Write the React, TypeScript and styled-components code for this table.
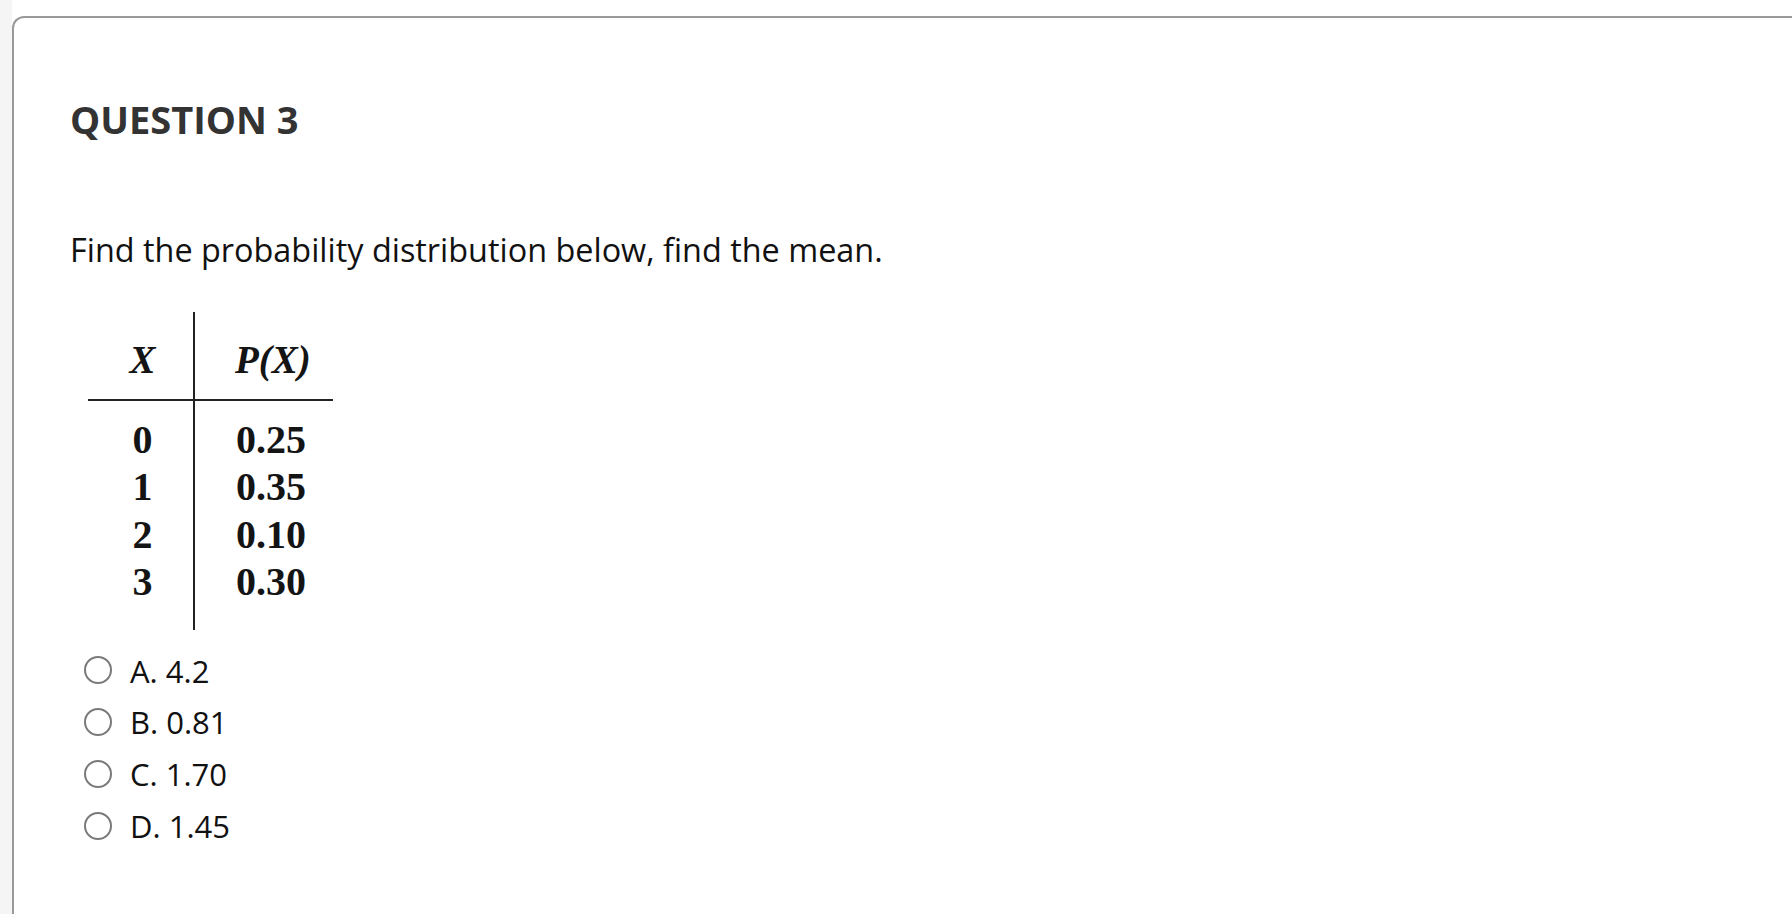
import React from "react";
import styled, { createGlobalStyle } from "styled-components";

const GlobalStyle = createGlobalStyle`
  html, body {
    margin: 0;
    padding: 0;
    background: #ffffff;
    overflow: hidden;
  }
  body {
    font-family: "Open Sans", "Noto Sans", sans-serif;
    color: #111111;
  }
`;

const Page = styled.div`
  display: flex;
  height: 914px;
  overflow: hidden;
  background: #ffffff;
`;

const SideStrip = styled.div`
  width: 12px;
  flex: 0 0 12px;
  background: #f5f5f5;
`;

const Main = styled.main`
  flex: 1;
  padding-top: 16px;
  min-width: 0;
`;

const Card = styled.section`
  border-top: 2px solid #9a9a9a;
  border-left: 2px solid #9a9a9a;
  border-top-left-radius: 12px;
  padding: 79px 0 0 56px;
  min-height: 1000px;
  box-sizing: border-box;
`;

const Title = styled.h2`
  margin: 0;
  font-family: "Open Sans", sans-serif;
  font-weight: 700;
  font-size: 38px;
  line-height: 45.6px;
  color: #333333;
`;

const Prompt = styled.p`
  margin: 82px 0 0 0;
  font-family: "Open Sans", sans-serif;
  font-size: 32.4px;
  line-height: 48px;
  color: #111111;
`;

const Table = styled.div`
  margin-top: 39px;
  margin-left: 18px;
  display: grid;
  grid-template-columns: 107px 138px;
  width: max-content;
  font-family: "Liberation Serif", "Times New Roman", serif;
  font-weight: 700;
  color: #141414;
`;

const HeadCell = styled.div<{ $left?: boolean }>`
  height: 58px;
  padding-top: 29px;
  border-bottom: 2px solid #222;
  ${(p) => (p.$left ? "border-right: 2px solid #222;" : "")}
  font-style: italic;
  font-size: 39px;
  line-height: 38px;
  text-align: ${(p) => (p.$left ? "center" : "left")};
  padding-left: ${(p) => (p.$left ? "4px" : "40px")};
`;

const BodyCol = styled.div<{ $left?: boolean }>`
  padding: 15px 0 24px ${(p) => (p.$left ? "4px" : "41px")};
  ${(p) => (p.$left ? "border-right: 2px solid #222;" : "")}
  text-align: ${(p) => (p.$left ? "center" : "left")};
  display: flex;
  flex-direction: column;
`;

const Value = styled.span`
  font-size: 40px;
  line-height: 47.5px;
`;

const Options = styled.ul`
  list-style: none;
  margin: 16px 0 0 0;
  padding: 0 0 0 14px;
  display: flex;
  flex-direction: column;
`;

const Option = styled.li`
  display: flex;
  align-items: center;
  gap: 18px;
  font-family: "Open Sans", sans-serif;
  font-size: 31px;
  line-height: 51.8px;
  color: #111111;
`;

const Radio = styled.span`
  width: 28px;
  height: 28px;
  box-sizing: border-box;
  border: 2px solid #7a7a7a;
  border-radius: 50%;
  background: #ffffff;
  flex: 0 0 auto;
  margin-top: -2px;
`;

const rows = [
  { x: "0", p: "0.25" },
  { x: "1", p: "0.35" },
  { x: "2", p: "0.10" },
  { x: "3", p: "0.30" },
];

const answers = ["A. 4.2", "B. 0.81", "C. 1.70", "D. 1.45"];

export default function App() {
  return (
    <>
      <GlobalStyle />
      <Page>
        <SideStrip />
        <Main>
          <Card>
            <Title>QUESTION 3</Title>
            <Prompt>Find the probability distribution below, find the mean.</Prompt>
            <Table>
              <HeadCell $left>X</HeadCell>
              <HeadCell>P(X)</HeadCell>
              <BodyCol $left>
                {rows.map((r) => (
                  <Value key={r.x}>{r.x}</Value>
                ))}
              </BodyCol>
              <BodyCol>
                {rows.map((r) => (
                  <Value key={r.p}>{r.p}</Value>
                ))}
              </BodyCol>
            </Table>
            <Options>
              {answers.map((a) => (
                <Option key={a}>
                  <Radio />
                  <span>{a}</span>
                </Option>
              ))}
            </Options>
          </Card>
        </Main>
      </Page>
    </>
  );
}
